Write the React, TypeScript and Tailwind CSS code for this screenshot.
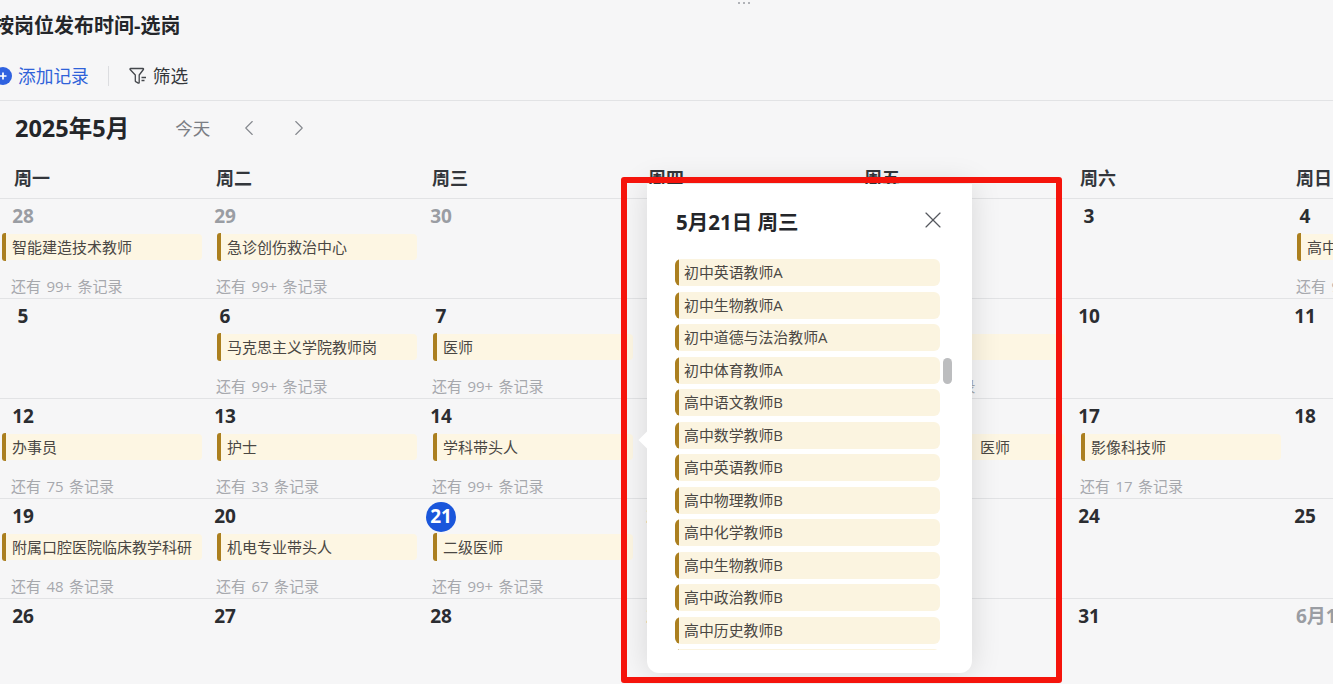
import { ChevronLeft, ChevronRight, X } from "lucide-react";

type Day = {
  num: string;
  muted?: boolean;
  today?: boolean;
  event?: string;
  more?: string;
};

const weekdays = ["周一", "周二", "周三", "周四", "周五", "周六", "周日"];

const weeks: Day[][] = [
  [
    { num: "28", muted: true, event: "智能建造技术教师", more: "还有 99+ 条记录" },
    { num: "29", muted: true, event: "急诊创伤救治中心", more: "还有 99+ 条记录" },
    { num: "30", muted: true },
    { num: "1" },
    { num: "2" },
    { num: "3" },
    { num: "4", event: "高中语文教师", more: "还有 99+ 条记录" },
  ],
  [
    { num: "5" },
    { num: "6", event: "马克思主义学院教师岗", more: "还有 99+ 条记录" },
    { num: "7", event: "医师", more: "还有 99+ 条记录" },
    { num: "8", event: "护士", more: "还有 99+ 条记录" },
    { num: "9", event: "辅导员", more: "还有 99+ 条记录" },
    { num: "10" },
    { num: "11" },
  ],
  [
    { num: "12", event: "办事员", more: "还有 75 条记录" },
    { num: "13", event: "护士", more: "还有 33 条记录" },
    { num: "14", event: "学科带头人", more: "还有 99+ 条记录" },
    { num: "15", event: "专任教师", more: "还有 99+ 条记录" },
    { num: "16", event: "住院部（主治）医师", more: "还有 36 条记录" },
    { num: "17", event: "影像科技师", more: "还有 17 条记录" },
    { num: "18" },
  ],
  [
    { num: "19", event: "附属口腔医院临床教学科研", more: "还有 48 条记录" },
    { num: "20", event: "机电专业带头人", more: "还有 67 条记录" },
    { num: "21", today: true, event: "二级医师", more: "还有 99+ 条记录" },
    { num: "22" },
    { num: "23" },
    { num: "24" },
    { num: "25" },
  ],
  [
    { num: "26" },
    { num: "27" },
    { num: "28" },
    { num: "29" },
    { num: "30" },
    { num: "31" },
    { num: "6月1日", muted: true },
  ],
];

const popItems = [
  "初中英语教师A",
  "初中生物教师A",
  "初中道德与法治教师A",
  "初中体育教师A",
  "高中语文教师B",
  "高中数学教师B",
  "高中英语教师B",
  "高中物理教师B",
  "高中化学教师B",
  "高中生物教师B",
  "高中政治教师B",
  "高中历史教师B",
  "高中地理教师B",
];

function DayCell({ day, first }: { day: Day; first: boolean }) {
  const long = day.num.length > 2;
  return (
    <div className="h-full min-w-0">
      <div
        className={`mt-[3px] flex h-[30px] items-center whitespace-nowrap rounded-full pb-px text-[19px] font-bold ${
          long ? "w-auto justify-start pl-[6px]" : "w-[30px] justify-center"
        } ${first ? "ml-2" : "ml-0"} ${
          day.today ? "bg-[#1a56db] text-white" : day.muted ? "text-[#9a9da3]" : "text-[#2b2d31]"
        }`}
      >
        {day.num}
      </div>
      {day.event && (
        <div className={`mt-px flex h-7 w-[200px] items-center ${first ? "ml-[2px]" : "ml-[7px]"}`}>
          <div className="h-7 w-1 shrink-0 rounded-l-[3px] bg-[#ab7f1f]" />
          <div className="flex h-[26px] flex-1 items-center overflow-hidden whitespace-nowrap rounded-r-[4px] bg-[#fdf6e3] pl-[6px] text-[15px] text-[#4a4743]">
            {day.event}
          </div>
        </div>
      )}
      {day.more && (
        <div
          className={`mt-[15px] whitespace-nowrap text-[15px] leading-5 text-[#a6a8ad] [word-spacing:1.5px] ${
            first ? "ml-[11px]" : "ml-[6px]"
          }`}
        >
          {day.more}
        </div>
      )}
    </div>
  );
}

function Popover() {
  return (
    <div className="absolute left-[647px] top-[184px] h-[489px] w-[325px] rounded-b-xl bg-white shadow-[0_0_30px_rgba(0,0,0,0.13)]">
      <div className="absolute left-[-6px] top-[250px] h-3 w-3 rotate-45 bg-white" />
      <div className="flex h-[75px] items-start justify-between pl-[29px] pr-[25px] pt-[24px]">
        <span className="text-[20.5px] font-bold leading-7 text-[#24262a]">5月21日 周三</span>
        <X size={28} strokeWidth={1} className="-mt-[2px] text-[#55585e]" />
      </div>
      <div className="ml-[28px] flex h-[391px] w-[265px] flex-col gap-[5.5px] overflow-hidden">
        {popItems.map((item) => (
          <div key={item} className="flex h-[27px] shrink-0 items-center overflow-hidden rounded-md bg-[#fbf4e0]">
            <div className="h-full w-1 shrink-0 rounded-l-md bg-[#ab7f1f]" />
            <span className="pl-[5px] text-[14.9px] text-[#4a4743]">{item}</span>
          </div>
        ))}
      </div>
      <div className="absolute left-[296px] top-[174px] h-[26px] w-[9px] rounded-full bg-[#bcbdbf]" />
    </div>
  );
}

export default function App() {
  return (
    <div className="relative h-[684px] w-[1333px] overflow-hidden bg-[#f6f6f7] font-['Open_Sans','Noto_Sans_CJK_SC',sans-serif] text-[#2b2d31]">
      {/* drag handle */}
      <div className="absolute left-[738px] top-[2px] flex gap-[3px]">
        <span className="h-[2px] w-[2px] rounded-full bg-[#9a9da3]" />
        <span className="h-[2px] w-[2px] rounded-full bg-[#9a9da3]" />
        <span className="h-[2px] w-[2px] rounded-full bg-[#9a9da3]" />
      </div>

      <div className="flex h-[52px] items-center">
        <h1 className="-ml-[6px] whitespace-nowrap text-[20px] font-bold leading-7 text-[#24262a]">
          按岗位发布时间-选岗
        </h1>
      </div>

      <div className="flex h-[49px] items-center border-b border-[#e2e3e5] pb-px">
        <div className="-ml-[6px] flex items-center gap-[6px]">
          <svg width="18" height="18" viewBox="0 0 18 18">
            <circle cx="9" cy="9" r="9" fill="#2f62e0" />
            <path d="M9 5.5v7M5.5 9h7" stroke="#fff" strokeWidth="1.7" />
          </svg>
          <span className="text-[17.7px] leading-6 text-[#2f62d9]">添加记录</span>
        </div>
        <div className="ml-[19px] h-5 w-px bg-[#dcdde0]" />
        <div className="ml-5 flex items-center gap-[6px]">
          <svg width="18" height="18" viewBox="0 0 18 18" fill="none" stroke="#44474c" strokeWidth="1.3">
            <path d="M1.5 1.5h12.5c.5 0 .7.6.4 1L10.2 8v7.6c0 .5-.5.7-.9.5l-2.6-1.5c-.3-.2-.4-.4-.4-.7V8L1.1 2.5c-.3-.4 0-1 .4-1z" strokeLinejoin="round" />
            <path d="M12.5 10.5h4.5M12.5 13.5h3" />
          </svg>
          <span className="text-[17.7px] leading-6 text-[#33363b]">筛选</span>
        </div>
      </div>

      <div className="flex h-[57px] items-center pb-[3px]">
        <span className="ml-[15px] whitespace-nowrap text-[23.5px] font-bold leading-8 text-[#24262a]">2025年5月</span>
        <span className="ml-[46px] text-[17.5px] leading-6 text-[#7b7e84]">今天</span>
        <ChevronLeft size={26} strokeWidth={1} className="ml-[26px] text-[#85888e]" />
        <ChevronRight size={26} strokeWidth={1} className="ml-6 text-[#85888e]" />
      </div>

      <div className="grid h-[41px] grid-cols-[210px_repeat(6,216px)] items-center border-b border-[#e2e3e5]">
        {weekdays.map((w, i) => (
          <div
            key={w}
            className={`text-[18px] font-semibold leading-6 text-[#33363b] ${i === 0 ? "pl-[14px]" : "pl-[6px]"}`}
          >
            {w}
          </div>
        ))}
      </div>

      {weeks.map((week, wi) => (
        <div
          key={wi}
          className="grid h-[100px] grid-cols-[210px_repeat(6,216px)] border-b border-[#e2e3e5] last:border-b-0"
        >
          {week.map((day, di) => (
            <DayCell key={di} day={day} first={di === 0} />
          ))}
        </div>
      ))}

      <Popover />

      {/* red annotation frame drawn on the screenshot */}
      <div className="pointer-events-none absolute left-[621px] top-[177px] h-[506px] w-[441px] rounded-[3px] border-[6px] border-[#f5140c]" />
    </div>
  );
}
